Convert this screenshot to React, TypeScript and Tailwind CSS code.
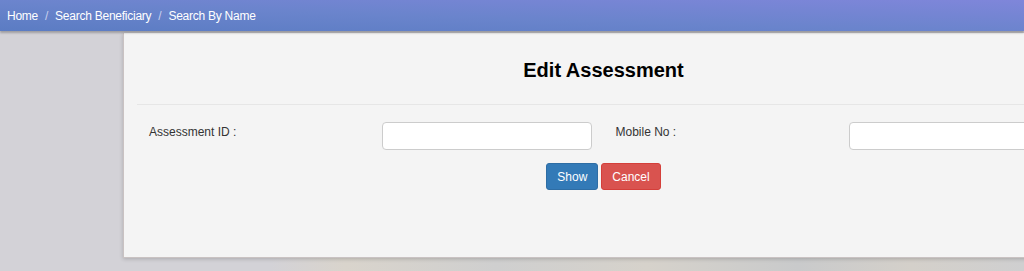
import React from 'react';

const crumbs = ['Home', 'Search Beneficiary', 'Search By Name'];

export default function App() {
  return (
    <div
      className="relative w-[1024px] h-[271px] overflow-hidden bg-[#d3d2d7] text-[#333]"
      style={{ fontFamily: '"Liberation Sans", Arial, sans-serif' }}
    >
      {/* faint background photo strip */}
      <div className="absolute left-[270px] right-0 bottom-0 h-[16px] bg-[linear-gradient(90deg,#d3d2d7_0%,#d9d4cc_10%,#cfcfcf_30%,#d6d2cb_50%,#c9cacb_70%,#d4d0ca_85%,#cfcfd0_100%)]" />

      {/* breadcrumb bar */}
      <div className="relative z-10 h-[31px] flex items-center px-[7px] gap-[7px] text-[12px] tracking-[-0.25px] text-white bg-[linear-gradient(to_top_right,#5b7cc3_0%,#6a84cc_45%,#7f86da_100%)] shadow-[0_2px_2px_rgba(0,0,0,0.25)]">
        {crumbs.map((c, i) => (
          <React.Fragment key={c}>
            {i > 0 && <span className="text-[#c9d1ee]">/</span>}
            <span>{c}</span>
          </React.Fragment>
        ))}
      </div>

      {/* card */}
      <div className="relative ml-[123px] mt-[2px] w-[960px] h-[225px] bg-[#f4f4f4] border-l border-b border-[#c9c2c2] shadow-[0_1px_4px_rgba(0,0,0,0.2)] px-[13px]">
        <h2 className="h-[71px] pt-[3px] flex items-center justify-center text-[20px] font-bold text-black">
          Edit Assessment
        </h2>
        <div className="border-t border-[#e6e6e6]" />

        <div className="grid grid-cols-4 mt-[17px]">
          <label className="px-[12px] pt-[1px] text-[12px]">Assessment ID :</label>
          <div className="px-[12px]">
            <input className="w-full h-[28px] bg-white border border-[#ccc] rounded-[4px]" />
          </div>
          <label className="px-[12px] pt-[1px] text-[12px]">Mobile No :</label>
          <div className="px-[12px]">
            <input className="w-full h-[28px] bg-white border border-[#ccc] rounded-[4px]" />
          </div>
        </div>

        <div className="flex justify-center gap-[3px] mt-[13px]">
          <button className="h-[27px] px-[10px] text-[12px] text-white bg-[#337ab7] border border-[#2e6da4] rounded-[3px]">
            Show
          </button>
          <button className="h-[27px] px-[10px] text-[12px] text-white bg-[#d9534f] border border-[#d43f3a] rounded-[3px]">
            Cancel
          </button>
        </div>
      </div>
    </div>
  );
}
